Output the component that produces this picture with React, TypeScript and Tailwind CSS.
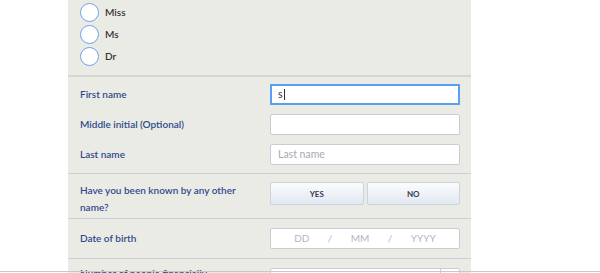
import React from "react";

const titles = ["Miss", "Ms", "Dr"];

function Label({ children }: { children: React.ReactNode }) {
  return <div className="w-[190px] text-[10px] leading-[17px] font-semibold text-[#2f4a8a]">{children}</div>;
}

export default function App() {
  return (
    <div className="relative h-[273px] w-[600px] overflow-hidden bg-white font-['Lato',sans-serif]">
      <div className="ml-[68px] w-[403px] bg-[#ebebe6]">
        <div className="flex flex-col gap-[3px] pl-[12px] pb-[9px] pt-[3px]">
          {titles.map((t) => (
            <div key={t} className="flex items-center gap-[6px]">
              <span className="h-[19px] w-[19px] rounded-full border-[1.5px] border-[#6ea2ea] bg-white" />
              <span className="text-[10px] font-semibold text-[#333]">{t}</span>
            </div>
          ))}
        </div>
        <div className="h-[2px] bg-[#d6d6d2]" />
        <div className="flex flex-col gap-[9px] pt-[7px] pb-[8px] pl-[12px]">
          <div className="flex items-center">
            <Label>First name</Label>
            <div className="flex h-[21px] w-[190px] items-center border-2 border-[#5b9ff0] bg-white px-[6px] text-[10.5px] text-[#333]">
              s<span className="ml-px h-[11px] w-px bg-[#333]" />
            </div>
          </div>
          <div className="flex items-center">
            <Label>Middle initial (Optional)</Label>
            <div className="h-[21px] w-[190px] rounded-[2px] border border-[#cbcbd8] bg-white" />
          </div>
          <div className="flex items-center">
            <Label>Last name</Label>
            <div className="flex h-[21px] w-[190px] items-center rounded-[2px] border border-[#cbcbd8] bg-white px-[7px] text-[10.5px] text-[#a8a8b0]">
              Last name
            </div>
          </div>
        </div>
        <div className="h-px bg-[#cdcdd6]" />
        <div className="flex h-[44px] items-start pt-[8px] pl-[12px]">
          <Label>
            Have you been known by any other
            <br />
            name?
          </Label>
          <div className="flex w-[190px] gap-[3px]">
            {["YES", "NO"].map((b) => (
              <div
                key={b}
                className="flex h-[23px] flex-1 items-center justify-center rounded-[2px] border border-[#cdd3de] bg-gradient-to-b from-[#fbfcfd] to-[#e1e8f1] text-[8px] font-bold text-[#333b55]"
              >
                {b}
              </div>
            ))}
          </div>
        </div>
        <div className="h-px bg-[#cdcdd6]" />
        <div className="flex items-center py-[9px] pl-[12px]">
          <Label>Date of birth</Label>
          <div className="flex h-[21px] w-[190px] items-center justify-around rounded-[2px] border border-[#cbcbd8] bg-white px-[14px] text-[10px] text-[#b5b5bf]">
            <span>DD</span>
            <span>/</span>
            <span>MM</span>
            <span>/</span>
            <span>YYYY</span>
          </div>
        </div>
        <div className="h-px bg-[#cdcdd6]" />
        <div className="flex items-start pt-[6px] pl-[12px]">
          <Label>Number of people financially</Label>
          <div className="mt-[3px] flex h-[21px] w-[190px] rounded-[2px] border border-[#cbcbd8] bg-white">
            <div className="flex-1" />
            <div className="w-[19px] border-l border-[#cbcbd8]" />
          </div>
        </div>
      </div>
      <div className="absolute bottom-[1px] left-0 h-px w-full bg-[#c8c8c8]" />
    </div>
  );
}
